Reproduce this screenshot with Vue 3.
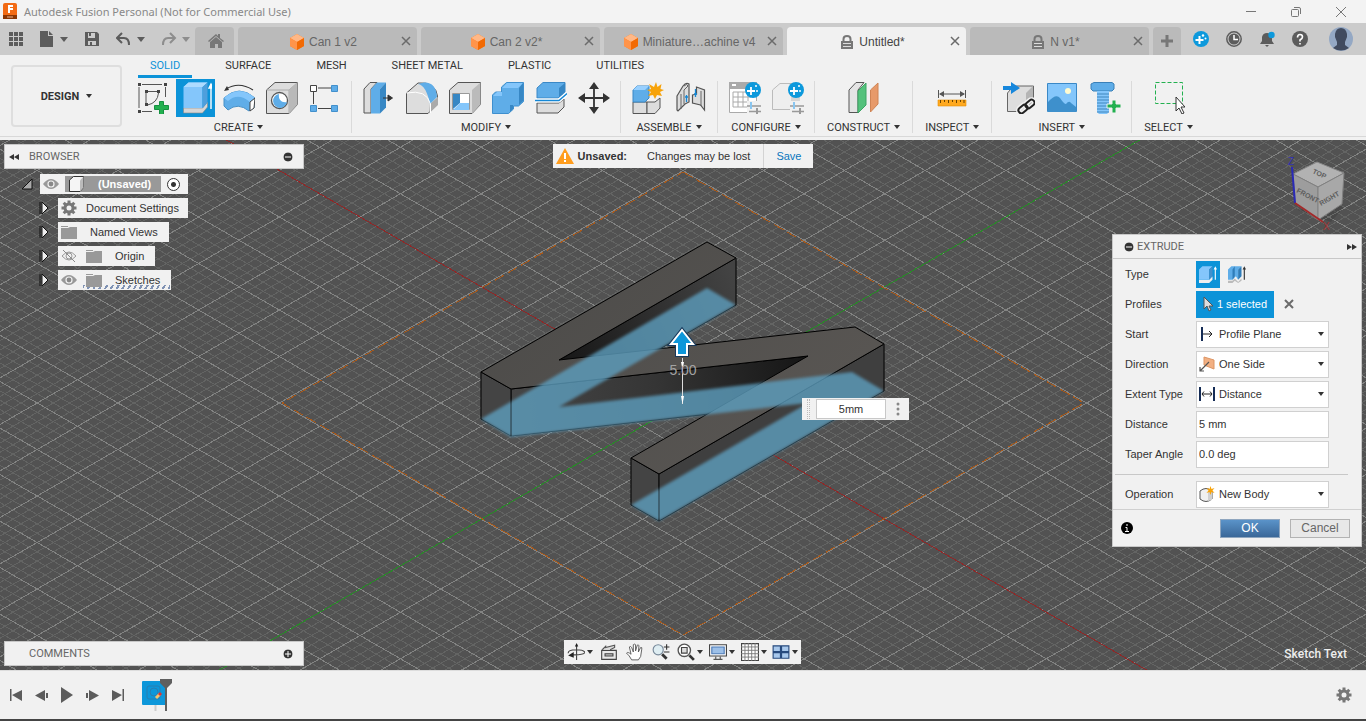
<script setup>
import { ref } from "vue";

const icons = {
  sketch: `<path d="M2 5v21M5 2.500h20M28.500 5v10M5 29.500h10" fill="none" stroke="#555"/><path d="M9 11v10M11 9.500h9M21.500 11q-1 10-11 12" fill="none" stroke="#555"/><g fill="#444"><path d="M1 1h3v3H1zM27 1h3v3h-3zM1 28h3v3H1zM8 8h3v3H8zM20 8h3v3h-3zM8 21h3v3H8z"/></g><path d="M22.500 19.500h4v4h5v4h-5v5h-4v-5h-5v-4h5z" fill="#22b04f" stroke="#159040"/>`,
  extrude: `<path d="M3.500 26v5h19l5-6v-5l-5 6z" fill="#d6d6d6" stroke="#888" stroke-width=".6"/><path d="M3.500 5l5-4.500h19l-5 4.500v21h-19z" fill="#84c6fb"/><path d="M3.500 5l5-4.500h19l-5 4.500z" fill="#addbff"/><path d="M22.500 5l5-4.500v20l-5 6z" fill="#4e9fdc"/><path d="M31 27V4M29 6l2-4 2 4z" stroke="#fff" fill="#fff" stroke-width="1.400"/>`,
  revolve: `<path d="M1 16Q16 2 32 16l-1 10-5 3Q15 20 5 28l-4-4z" fill="#5fade8" stroke="#4790c6"/><path d="M1 16Q16 2 32 16l-5 4Q15 10 5 19z" fill="#84c6fb"/><path d="M27 20l5-4-1 10-4 3z" fill="#fff" stroke="#444"/><path d="M3 7Q16-1 30 8" fill="none" stroke="#333" stroke-width="1.200"/><path d="M1 9l3-5 2 4z" fill="#333"/>`,
  hole: `<path d="M.5 8L9 .5h22.500v22L23 31.500H.5z" fill="#ddd" stroke="#555"/><path d="M.5 8H23L31.500.5M23 8v23.500" fill="none" stroke="#aaa"/><path d="M23 8l8.500-7.500v22L23 31.500z" fill="#b9b9b9"/><circle cx="13.500" cy="18.500" r="8" fill="#fff" stroke="#555" stroke-width="1.300"/><path d="M13 12a7 7 0 1 0 8 8c-5 1-9-2-8-8z" fill="#5fade8"/>`,
  pattern: `<path d="M9 6h13M4.500 9v13M9 26.500h13" stroke="#444" fill="none"/><path d="M1.500 3.500h6v6h-6z" fill="#fff" stroke="#444"/><path d="M22.500 3.500h6v6h-6zM22.500 23.500h6v6h-6zM1.500 23.500h6v6h-6z" fill="#5fade8" stroke="#4290cc"/>`,
  presspull: `<path d="M1 7l6-6.500h7L8 7v24H1z" fill="#ddd" stroke="#555"/><path d="M8 7l6-6.500h9L17 7v24.500H8z" fill="#5fade8"/><path d="M17 7l6-6.500v25l-6 6z" fill="#3787c4"/><path d="M20 16h6M25 13l4.500 3-4.500 3z" stroke="#333" fill="#333"/>`,
  fillet: `<path d="M.5 11L12 1q18-2 20 15l-1 6-9 9.500H.5z" fill="#ddd" stroke="#555"/><path d="M12 2q8 1 12 20l7-7Q30 0 18 .500z" fill="#5fade8"/><path d="M24 22l8-7v8l-9 8.500z" fill="#aaa"/><path d="M.5 11q20-4 24 11v9" fill="none" stroke="#fff"/>`,
  shell: `<path d="M.5 8L9 .5h22.500v22L23 31.500H.5z" fill="#ddd" stroke="#555"/><path d="M23 8l8.500-7.500v22L23 31.500z" fill="#bbb"/><path d="M3.500 11.500h17v16h-17z" fill="#fff" stroke="#999"/><path d="M4 12h7v9l-7 6z" fill="#3787c4"/><path d="M4 28l7-7h9v7z" fill="#84c6fb"/>`,
  combine: `<path d="M.5 13l3-3h6V5l5-4.500h17v19l-5 4.500h-5v3l-5 4.500H.5z" fill="#5fade8" stroke="#3e8fce"/><path d="M10 6l5-5h16l-5 5zM1 14l4-4h5v4z" fill="#84c6fb"/><path d="M27 6l4-5v18l-4 4zM18 23h3v4l-3 3z" fill="#3787c4"/>`,
  split: `<path d="M2 6l6-5.500h22v10L23 16H2z" fill="#5fade8" stroke="#3a88c6"/><path d="M24 6l6-5v9l-6 6z" fill="#3787c4"/><path d="M2 21h22l5-4v8l-6 6H2z" fill="#ddd" stroke="#555"/><path d="M0 18.500h24l8-7" fill="none" stroke="#fff" stroke-width="4"/><path d="M0 18.500h24l8-7" fill="none" stroke="#1588d6" stroke-width="1.400"/>`,
  move: `<path d="M16 4v24M4 16h24" stroke="#333" stroke-width="1.800"/><path d="M16 0l5 7H11zM16 32l5-7H11zM0 16l7-5v10zM32 16l-7-5v10z" fill="#333"/>`,
  component: `<path d="M1 20h14v11.500H1z" fill="#ddd" stroke="#555"/><path d="M15 20h8l5-4v10l-5 5.500h-8z" fill="#ddd" stroke="#555"/><path d="M1 20V8l4-4h12v12l-4 4z" fill="#5fade8" stroke="#3a88c6"/><path d="M1 8l4-4h12l-4 4z" fill="#98d0ff"/><path d="M24 0l1.500 5 4-3-1 5 3.500 1-4 2 2 4-5-1-2 4-2-4-5 1 3-4-4-2 4-1-2-5 5 3z" fill="#f7a30a"/>`,
  joint: `<path d="M2 14l6-10q3-4 6-2v18l-4 2-7 7-1-1z" fill="#ddd" stroke="#555" stroke-width="1.200"/><path d="M6 12v15M9 4q3-3 4 0l-4 4v14" fill="none" stroke="#666"/><path d="M17.500 13l4-1V5l8 3v20l-4-5-8-2z" fill="#ddd" stroke="#555" stroke-width="1.200"/><path d="M26 9v15" stroke="#666"/><path d="M11.500 13v7M10 15h3M20.500 7v8M19 12h3" stroke="#1588d6" stroke-width="1.300" fill="none"/>`,
  configtable: `<path d="M.5.500h27v30H.5z" fill="#fff" stroke="#aaa"/><path d="M0 0h28v7H0z" fill="#aaa"/><path d="M3 2h4v2H3z" fill="#fff"/><path d="M4 10h16M4 15h18M4 20h18M4 25h18M4 10v15M9 10v15M14 10v15M19 10v15" stroke="#aaa"/><path d="M18 19h14v13H18z" fill="#f1f1f1"/><path d="M18 24h14M20 29.500h12" stroke="#999" stroke-width="1.500"/><path d="M22 20v7" stroke="#8ac6f0" stroke-width="2"/><path d="M28 26v6" stroke="#999" stroke-width="2"/><circle cx="24" cy="8" r="8" fill="#0d99dc"/><path d="M22 5v8M18 9h8" stroke="#fff" stroke-width="1.800"/><circle cx="27" cy="4" r="1" fill="#fff"/><circle cx="28" cy="9" r="1" fill="#fff"/>`,
  configbody: `<path d="M.5 8L8 1.500h19v18l-8 8H.5z" fill="#eee" stroke="#bbb"/><path d="M19 8l8-6v17l-8 8z" fill="#d5d5d5"/><path d="M18 19h14v13H18z" fill="#f1f1f1"/><path d="M18 24h14M20 29.500h12" stroke="#999" stroke-width="1.500"/><path d="M22 20v7" stroke="#8ac6f0" stroke-width="2"/><path d="M28 26v6" stroke="#999" stroke-width="2"/><circle cx="24" cy="8" r="8" fill="#0d99dc"/><path d="M22 5v8M18 9h8" stroke="#fff" stroke-width="1.800"/><circle cx="27" cy="4" r="1" fill="#fff"/><circle cx="28" cy="9" r="1" fill="#fff"/>`,
  plane: `<path d="M1 8l7-7.500h8L10 8v22.500H1z" fill="#e4e4e4" stroke="#555"/><path d="M10 9l8-8v22l-8 8z" fill="#54c27c" stroke="#3da565"/><path d="M22.500 8l7.500-7v21l-7.500 8z" fill="#e79a6a" stroke="#cf8455"/>`,
  measure: `<path d="M2.500 8v8M29.500 8v8M4 12h24" stroke="#555"/><path d="M3 12l5-3v6zM29 12l-5-3v6z" fill="#555"/><path d="M2 18h28v6H2z" fill="#ffa91f" stroke="#e58d00" stroke-width=".6"/><path d="M4.500 18v3M8.500 18v2M12.500 18v3M16.500 18v2M20.500 18v3M24.500 18v2M28 18v3" stroke="#6a4300"/>`,
  derive: `<path d="M4.500 11l6-7h20v17L23 29.500H4.500z" fill="#ddd" stroke="#666"/><path d="M23 11l7-7v18l-7 7z" fill="#b5b5b5"/><path d="M0 4h8V0l9 6-9 6V8H0z" fill="#1787dc"/><g fill="none" stroke="#f1f1f1" stroke-width="5"><rect x="15" y="24" width="10" height="6" rx="3" transform="rotate(-40 20 27)"/><rect x="22" y="19" width="10" height="6" rx="3" transform="rotate(-40 27 22)"/></g><g fill="none" stroke="#222" stroke-width="2"><rect x="15" y="24" width="10" height="6" rx="3" transform="rotate(-40 20 27)"/><rect x="22" y="19" width="10" height="6" rx="3" transform="rotate(-40 27 22)"/></g>`,
  picture: `<path d="M1.500 1.500h29v28h-29z" fill="#84c6fb" stroke="#3a88c6"/><circle cx="22" cy="9" r="3" fill="#fffbd0"/><path d="M2 20q8-9 12-4 4 6 6 6 3-4 5-1l5 4v5H2z" fill="#3e90cc"/>`,
  bolt: `<path d="M2 2l3-1.500h18l2 1.500v5l-2 2H4L2 7z" fill="#5fade8" stroke="#3a80b8"/><path d="M8 9h12v21l-2 2h-8l-2-2z" fill="#84c6fb"/><path d="M8 12h12M8 15h12M8 18h12M8 21h12M8 24h12M8 27h12M8 30h12" stroke="#3e86bd"/><path d="M23 18h4v4h5v4h-5v5h-4v-5h-5v-4h5z" fill="#22b04f" stroke="#f1f1f1"/>`,
  selectbox: `<path d="M2.500.500h27v21h-27z" fill="none" stroke="#22b04f" stroke-dasharray="4 2"/><path d="M23 15v14l3-3 3 6 2-1-3-6h4z" fill="#fff" stroke="#333"/>`,
  grid: `<path d="M0 0h4v4H0zM5 0h4v4H5zM10 0h4v4h-4zM0 5h4v4H0zM5 5h4v4H5zM10 5h4v4h-4zM0 10h4v4H0zM5 10h4v4H5zM10 10h4v4h-4z" fill="#5c5c5c"/>`,
  file: `<path d="M1 0h8v5h5v11H1zM10 0l4 4h-4z" fill="#5c5c5c"/>`,
  save: `<path d="M1 1h12l2 2v12H1z" fill="#5c5c5c"/><path d="M4 2h7v5H4zM4 10h8v4H4z" fill="#ccc"/><path d="M5 2h2v3H5zM6 11h2v3H6z" fill="#5c5c5c"/>`,
  undo: `<path d="M2 7h6q5 0 5 7" fill="none" stroke="currentColor" stroke-width="2"/><path d="M6 2L1 7l5 5" fill="none" stroke="currentColor" stroke-width="2"/>`,
  redo: `<path d="M13 7H7q-5 0-5 7" fill="none" stroke="currentColor" stroke-width="2"/><path d="M9 2l5 5-5 5" fill="none" stroke="currentColor" stroke-width="2"/>`,
  home: `<path d="M0 8l8-7 2 2V1h2v4l4 3-1 1-7-6-7 6zM2 9l6-5 6 5v6h-4v-4H7v4H2z" fill="#777"/>`,
  cube: `<path d="M8 0l7 4v8l-7 4-7-4V4z" fill="#ff7b1c"/><path d="M8 0l7 4-7 4-7-4z" fill="#ffb887"/><path d="M1 4l7 4v8l-7-4z" fill="#ff944a"/><path d="M8 8l7-4v8l-7 4z" fill="#f26a04"/>`,
  lock: `<path d="M4.500 8V5Q4.500 2 8 2t3.500 3v3" fill="none" stroke="#777" stroke-width="2"/><path d="M2 7h12v8H2z" fill="#777"/><path d="M4 9.500h8M4 12.500h8" stroke="#ddd"/>`,
  sparkle: `<circle cx="8" cy="8" r="8" fill="#0d99dc"/><path d="M6.500 5v8M2.500 9h8" stroke="#fff" stroke-width="2"/><circle cx="10" cy="4.500" r="1.200" fill="#fff"/><circle cx="12.500" cy="7.500" r="1" fill="#fff"/>`,
  clock: `<circle cx="8" cy="8" r="7.200" fill="none" stroke="#5c5c5c" stroke-width="1.500"/><circle cx="8" cy="8" r="5.500" fill="#5c5c5c"/><path d="M8 4v4.500h4" fill="none" stroke="#fff" stroke-width="1.500"/>`,
  bell: `<path d="M1 13l2-3V6q1-4 5-4t5 4v4l2 3zM6 14h4l-2 2z" fill="#5c5c5c"/><circle cx="12.500" cy="4" r="3.200" fill="#0d99dc"/>`,
  help: `<circle cx="8" cy="8" r="8" fill="#5c5c5c"/><path d="M5.500 6.500q0-3 2.500-3t2.500 2.500Q10.500 7.500 8 9v1.500M8 12v1.500" stroke="#fff" stroke-width="1.600" fill="none"/>`,
  gear: `<g fill="#777"><circle cx="8" cy="8" r="5.500"/><path d="M6.500.500h3v15h-3z"/><path d="M6.500.500h3v15h-3z" transform="rotate(45 8 8)"/><path d="M6.500.500h3v15h-3z" transform="rotate(90 8 8)"/><path d="M6.500.500h3v15h-3z" transform="rotate(135 8 8)"/></g><circle cx="8" cy="8" r="2.500" fill="#f1f1f1"/>`,
  eye: `<path d="M0 8q8-10 16 0-8 10-16 0z" fill="#999"/><circle cx="8" cy="8" r="3.600" fill="#f1f1f1"/><circle cx="8" cy="8" r="2.400" fill="#888"/>`,
  hidden: `<path d="M1 8q7-8 14 0-7 8-14 0z" fill="none" stroke="#999"/><circle cx="8" cy="8" r="3" fill="none" stroke="#999"/><path d="M2 2l12 12" stroke="#888"/>`,
  folder: `<path d="M0 2h7v1H0zM0 4h7l2-1h7v12H0z" fill="#999"/>`,
  body: `<path d="M1.500 4l4-3.500h10v11L12 15.500H1.500z" fill="#f5f5f5" stroke="#333"/><path d="M12 4.500l3.500-4v11l-3.500 4z" fill="#bbb"/>`,
  orbit: `<path d="M8.500 1v14M1 9q0-3 7-3t8 2.500Q14 11 4 10.500" fill="none" stroke="#444"/><path d="M7 3l1.500-3L10 3M6 8l-5 3 5 2z" fill="#222"/>`,
  lookat: `<path d="M1.500 6.500h13v8h-13z" fill="#e8e8e8" stroke="#444"/><path d="M4.500 9.500h7v2h-7z" fill="#bbb" stroke="#444"/><path d="M2 6l3-3v1l8-2v2L9 6" fill="#ddd" stroke="#555"/>`,
  hand: `<path d="M5 15Q3 11 .500 9q1-1.500 4 1L3 3.500q1-1 2 .5l1.500 4V1.500q1-1 2 0V7l1.500-5q1-1 1.500.5L11 8l2-4q1.500-.5 1 1.500L13 12l-2 3z" fill="#fff" stroke="#555" stroke-width=".8"/>`,
  zoom: `<circle cx="5.500" cy="6" r="4.500" fill="#deedf2" stroke="#789"/><path d="M9 10l4 4" stroke="#333" stroke-width="2.500"/><path d="M13 1v5M10.500 3.500h5M10.500 8h5" stroke="#333"/>`,
  fit: `<circle cx="6.500" cy="6.500" r="5.500" fill="#fff" stroke="#555" stroke-width="1.200"/><path d="M4 4h5v5H4z" fill="#ddd" stroke="#444"/><path d="M11 11l4 4" stroke="#333" stroke-width="2.500"/>`,
  display: `<path d="M.500 1.500h15v10H.5z" fill="#fff" stroke="#444"/><path d="M2.500 3.500h11v6h-11z" fill="#9dc0e8" stroke="#4b78b5"/><path d="M4 14.500h8M6 12v2M10 12v2" stroke="#555"/>`,
  mesh: `<path d="M.500.500h15v15H.5z" fill="#fff" stroke="#444"/><path d="M3.500 0v16M6.500 0v16M9.500 0v16M12.500 0v16M0 3.500h16M0 6.500h16M0 9.500h16M0 12.500h16" stroke="#777" stroke-width=".8"/>`,
  views: `<path d="M1 2.500h6.500v5H1zM8.500 2.500H15v5H8.500zM1 8.500h6.500v5H1zM8.500 8.500H15v5H8.500z" fill="#a8c8ec" stroke="#274a7d"/>`,
  first: `<path d="M1 2h1.500v12H1zM13 3v11L3 8z" fill="#5c5c5c"/>`,
  prev: `<path d="M11 3v11L1 8.500zM12 6h2v5h-2z" fill="#5c5c5c"/>`,
  play: `<path d="M2 0l12 8-12 8z" fill="#5c5c5c"/>`,
  next: `<path d="M5 3v11l10-5.500zM2 6h2v5H2z" fill="#5c5c5c"/>`,
  last: `<path d="M13.500 2H15v12h-1.500zM3 3v11l10-6z" fill="#5c5c5c"/>`,
  profile: `<path d="M3 1v14" stroke="#152c56" stroke-width="2"/><path d="M4 8h9M10 5l3 3-3 3" fill="none" stroke="#222"/>`,
  oneside: `<path d="M5 1l10 3v9L5 9z" fill="#f2b083" stroke="#dd9564"/><path d="M10 6l-9 9M1 11v4h4" fill="none" stroke="#555" stroke-width="1.200"/>`,
  distance: `<path d="M1 1v14M15 1v14" stroke="#152c56" stroke-width="2"/><path d="M3 8h10M5 5.500L3 8l2 2.500M11 5.500L13 8l-2 2.500" fill="none" stroke="#222"/>`,
  newbody: `<path d="M1 5v8q6 5 12 0V5q-6-5-12 0z" fill="#f0f0f0" stroke="#555"/><path d="M9 6h4v8l-4 1z" fill="#d0d0d0"/><path d="M11.500 0l1 3 3-1-2 2.500 2 2.500-3-1-1 3-1-3-3 1 2-2.500-2-2.500 3 1z" fill="#f7a30a"/>`,
  typesolid: `<path d="M0 13h9l3-3v3l-3 3H0z" fill="#eee"/><path d="M0 4l3-3h9L9 4v9H0z" fill="#84c6fb"/><path d="M9 4l3-3v9l-3 3z" fill="#4290cc"/><path d="M14.500 13V3" stroke="#fff"/><path d="M13 4l1.500-3L16 4z" fill="#fff"/>`,
  typethin: `<path d="M0 14h4l2-2 3 3 3-3v2l-3 2-3-2-2 2H0z" fill="#bbb"/><path d="M0 4l3-3h9L9 4v9l-2-3-3 3H0z" fill="#5fade8"/><path d="M9 4l3-3v9l-3 3zM4 4l2-3v9l-2 3z" fill="#2f7db9"/><path d="M14.500 13V3" stroke="#333"/><path d="M13 4l1.500-3L16 4z" fill="#333"/>`,
};

const docTabs = [
  { title: "Can 1 v2", icon: "cube" },
  { title: "Can 2 v2*", icon: "cube" },
  { title: "Miniature…achine v4", icon: "cube" },
  { title: "Untitled*", icon: "lock", active: true },
  { title: "N v1*", icon: "lock" },
];

const ribbonTabs = ["SOLID", "SURFACE", "MESH", "SHEET METAL", "PLASTIC", "UTILITIES"];
const activeRibbon = ref("SOLID");

const toolGroups = [
  { name: "CREATE", tools: ["sketch", "extrude", "revolve", "hole", "pattern"] },
  { name: "MODIFY", tools: ["presspull", "fillet", "shell", "combine", "split", "move"] },
  { name: "ASSEMBLE", tools: ["component", "joint"] },
  { name: "CONFIGURE", tools: ["configtable", "configbody"] },
  { name: "CONSTRUCT", tools: ["plane"] },
  { name: "INSPECT", tools: ["measure"] },
  { name: "INSERT", tools: ["derive", "picture", "bolt"] },
  { name: "SELECT", tools: ["selectbox"] },
];

const treeRows = [
  { label: "Document Settings", icons: ["gear"] },
  { label: "Named Views", icons: ["folder"], folder: true },
  { label: "Origin", icons: ["hidden", "folder"], folder: true },
  { label: "Sketches", icons: ["eye", "folder"], folder: true, hatched: true },
];

const navTools = [
  { icon: "orbit", menu: true },
  { icon: "lookat" },
  { icon: "hand" },
  { icon: "zoom" },
  { icon: "fit", menu: true },
  { icon: "display", menu: true },
  { icon: "mesh", menu: true },
  { icon: "views", menu: true },
];

const selects = [
  { id: "start", label: "Start", icon: "profile", value: "Profile Plane" },
  { id: "direction", label: "Direction", icon: "oneside", value: "One Side" },
  { id: "extent", label: "Extent Type", icon: "distance", value: "Distance" },
];

const distance = ref("5 mm");
const taper = ref("0.0 deg");
const inlineValue = ref("5mm");

// isometric floor grid, every fifth line is a major one
const slope = 0.576;
const step = 9.3;
let minor = "";
let major = "";
for (let k = -80; k <= 80; k++) {
  const y = 403 + k * step;
  const rise = 1000 * slope;
  const d = `M-317 ${y - rise}L1683 ${y + rise}M-317 ${y + rise}L1683 ${y - rise}`;
  if (k % 5 === 0) {
    major += d;
  } else {
    minor += d;
  }
}
</script>

<template>
  <div class="app">
    <header class="titlebar">
      <svg class="logo" viewBox="0 0 15 17">
        <rect width="14" height="16" rx="2" fill="#f26a14" />
        <path d="M0 12h14v4H0z" fill="#8a3503" />
        <path d="M6 10V3h4M6 6h4" fill="none" stroke="#fff" stroke-width="2" />
        <path d="M4 14h6" stroke="#e8b494" />
      </svg>
      <h1>Autodesk Fusion Personal (Not for Commercial Use)</h1>
      <div class="window-buttons">
        <button aria-label="Minimize"><svg viewBox="0 0 12 12"><path d="M1 5.500h10" /></svg></button>
        <button aria-label="Restore">
          <svg viewBox="0 0 12 12"><rect x="1.500" y="3.500" width="7" height="7" rx="1" /><path d="M4 1.500h5q1.500 0 1.500 1.500v5" /></svg>
        </button>
        <button aria-label="Close"><svg viewBox="0 0 12 12"><path d="M1 1l10 10M11 1L1 11" /></svg></button>
      </div>
    </header>

    <nav class="tabbar">
      <div class="quick">
        <button aria-label="Data panel"><svg class="i14" viewBox="0 0 14 14" v-html="icons.grid"></svg></button>
        <button aria-label="File"><svg class="i16" viewBox="0 0 16 16" v-html="icons.file"></svg><i class="caret"></i></button>
        <button aria-label="Save"><svg class="i16" viewBox="0 0 16 16" v-html="icons.save"></svg></button>
        <button aria-label="Undo"><svg class="i16" viewBox="0 0 16 16" v-html="icons.undo"></svg><i class="caret"></i></button>
        <button aria-label="Redo" class="faded"><svg class="i16" viewBox="0 0 16 16" v-html="icons.redo"></svg><i class="caret"></i></button>
      </div>
      <button class="home" aria-label="Home"><svg class="i16" viewBox="0 0 16 16" v-html="icons.home"></svg></button>
      <div v-for="tab in docTabs" :key="tab.title" class="doc-tab" :class="{ active: tab.active }">
        <span class="doc-title"><svg class="i16" viewBox="0 0 16 16" v-html="icons[tab.icon]"></svg>{{ tab.title }}</span>
        <button class="close" aria-label="Close tab"><svg viewBox="0 0 12 12"><path d="M2 2l8 8M10 2l-8 8" /></svg></button>
      </div>
      <button class="add-tab" aria-label="New tab"><svg viewBox="0 0 14 14"><path d="M7 1v12M1 7h12" stroke="#777" stroke-width="3" /></svg></button>
      <div class="account">
        <button v-for="name in ['sparkle', 'clock', 'bell', 'help']" :key="name" :aria-label="name">
          <svg class="i16" viewBox="0 0 16 16" v-html="icons[name]"></svg>
        </button>
        <svg class="avatar" viewBox="0 0 24 24">
          <circle cx="12" cy="12" r="12" fill="#94a8c4" />
          <path d="M6 7q1-6 6-6t6 6v3l-2 5v3l4 3q-8 5-16 0l4-3v-3l-2-5z" fill="#414b5f" />
        </svg>
      </div>
    </nav>

    <section class="ribbon">
      <button class="workspace">DESIGN <i class="caret"></i></button>
      <div class="ribbon-main">
        <div class="ribbon-tabs">
          <button
            v-for="name in ribbonTabs"
            :key="name"
            :class="{ active: name === activeRibbon }"
            @click="activeRibbon = name"
          >
            {{ name }}
          </button>
        </div>
        <div class="groups">
          <div v-for="group in toolGroups" :key="group.name" class="group">
            <div class="tools">
              <button v-for="tool in group.tools" :key="tool" :class="{ chosen: tool === 'extrude' }" :aria-label="tool">
                <svg viewBox="0 0 32 32" v-html="icons[tool]"></svg>
              </button>
            </div>
            <button class="group-name">{{ group.name }} <i class="caret"></i></button>
          </div>
        </div>
      </div>
    </section>

    <main class="viewport">
      <svg class="canvas" viewBox="0 140 1366 530" preserveAspectRatio="xMidYMid slice">
        <defs>
          <linearGradient id="wallA" gradientUnits="userSpaceOnUse" x1="570" y1="360" x2="735" y2="280">
            <stop offset="0" stop-color="#191919" />
            <stop offset="1" stop-color="#434343" />
          </linearGradient>
          <linearGradient id="wallB" gradientUnits="userSpaceOnUse" x1="512" y1="410" x2="800" y2="370">
            <stop offset="0" stop-color="#464646" />
            <stop offset="0.500" stop-color="#353535" />
            <stop offset="1" stop-color="#171717" />
          </linearGradient>
          <linearGradient id="lid" x1="0" y1="0" x2="1" y2="0.600">
            <stop offset="0" stop-color="#4b4a48" />
            <stop offset="1" stop-color="#595653" />
          </linearGradient>
          <filter id="soft"><feGaussianBlur stdDeviation="1.500" /></filter>
        </defs>
        <rect y="-300" x="-300" width="2000" height="1500" fill="#525252" />
        <g fill="none" shape-rendering="crispEdges">
          <path :d="minor" stroke="#636463" />
          <path :d="major" stroke="#838483" />
          <path d="M-20 -2L1386 808" stroke="#8f2727" />
          <path d="M-20 808L1386 -2" stroke="#288a28" />
          <path d="M683 172L1084 403 683 635 282 403z" stroke="#a8591a" stroke-dasharray="11 4" />
        </g>
        <g stroke="#000" stroke-linejoin="round">
          <path d="M736 258L559 360V407L736 305z" fill="url(#wallA)" />
          <path d="M511 389L808 356V403L511 436z" fill="url(#wallB)" />
          <path d="M481 372L511 389V436L481 419z" fill="#444" />
          <path d="M631 458L659 474V521L631 505z" fill="#444" />
          <path d="M884 344L659 474V521L884 391z" fill="#3f3f3f" />
          <path d="M707 242L736 258 559 360 855 327 884 344 659 474 631 458 808 356 511 389 481 372z" fill="url(#lid)" />
        </g>
        <path
          d="M707 288L736 305 559 407 852 372 884 391 659 521 631 505 808 403 511 437 481 419z"
          fill="#5d9ebe"
          opacity="0.800"
          filter="url(#soft)"
        />
        <path d="M736 258V305M511 389V436M659 474V521M884 344V391" stroke="#222" opacity="0.700" />
        <path d="M682.500 358V404" stroke="#ddd" />
        <path d="M681 362l1.500 8 1.500-8M681 396l1.500 8 1.500-8" fill="#fff" />
        <text x="683" y="375" class="dimension">5.00</text>
        <path d="M682 330L693 344H687V355H677V344H671z" fill="#0d97da" stroke="#17385a" stroke-width="4" />
        <path d="M682 330L693 344H687V355H677V344H671z" fill="#0d97da" stroke="#fff" stroke-width="2" />
      </svg>

      <div class="left-side">
        <div class="panel">
          <svg class="rewind" viewBox="0 0 10 8"><path d="M5 1v6L0 4zM10 1v6L5 4z" /></svg>
          <h2>BROWSER</h2>
          <button class="round" aria-label="Collapse browser"><svg viewBox="0 0 10 10"><circle cx="5" cy="5" r="5" /><path d="M2 5h6" /></svg></button>
        </div>
        <ul class="tree">
          <li class="root">
            <svg class="opened" viewBox="0 0 12 12"><path d="M11 1v10H1z" fill="#aaa" stroke="#111" /></svg>
            <div class="node">
              <svg class="i16" viewBox="0 0 16 16" v-html="icons.eye"></svg>
              <span class="doc-name"><svg class="i16" viewBox="0 0 16 16" v-html="icons.body"></svg>(Unsaved)</span>
              <input type="radio" checked aria-label="Activate component" />
            </div>
          </li>
          <li v-for="row in treeRows" :key="row.label">
            <svg class="closed" viewBox="0 0 10 14"><path d="M1 1v12M3 1l6 6-6 6z" fill="#eee" stroke="#111" /></svg>
            <div class="node" :class="{ folder: row.folder, hatched: row.hatched }">
              <svg v-for="name in row.icons" :key="name" class="i16" viewBox="0 0 16 16" v-html="icons[name]"></svg>
              <span>{{ row.label }}</span>
            </div>
          </li>
        </ul>
        <div class="panel comments">
          <h2>COMMENTS</h2>
          <button class="round" aria-label="Open comments"><svg viewBox="0 0 10 10"><circle cx="5" cy="5" r="5" /><path d="M2 5h6M5 2v6" /></svg></button>
        </div>
      </div>

      <div class="middle">
        <div class="notice">
          <svg viewBox="0 0 18 16"><path d="M9 0l9 16H0z" fill="#ff9d1e" /><path d="M9 5v6M9 12v2" stroke="#fff" stroke-width="2" /></svg>
          <strong>Unsaved:</strong>
          <span>Changes may be lost</span>
          <a href="#">Save</a>
        </div>
        <div class="navbar">
          <button v-for="tool in navTools" :key="tool.icon" :class="{ plain: !tool.menu }" :aria-label="tool.icon">
            <svg class="i18" viewBox="0 0 16 16" v-html="icons[tool.icon]"></svg>
            <i v-if="tool.menu" class="caret"></i>
          </button>
        </div>
      </div>

      <div class="right-side">
        <svg class="viewcube" viewBox="0 0 70 84">
          <path d="M18 60l33 12 12-14-10-12z" fill="#333" opacity="0.300" />
          <path d="M37 12L64 23 38 37 13 24z" fill="#b2b2b2" stroke="#888" />
          <path d="M13 24L38 37V70L15 53z" fill="#9d9d9d" stroke="#808080" />
          <path d="M38 37L64 23 62 54 38 70z" fill="#a8a8a8" stroke="#808080" />
          <path d="M12 17L15 53" stroke="#2a2ab8" stroke-width="2" />
          <path d="M15 53L43 72" stroke="#a32a2a" stroke-width="2" />
          <text x="8" y="15" class="axis">Z</text>
          <text x="43" y="80" class="axis axis-x">X</text>
          <text x="32" y="23" transform="rotate(24 32 23)">TOP</text>
          <text x="16" y="42" transform="rotate(28 16 42)">FRONT</text>
          <text x="41" y="56" transform="rotate(-30 41 56)">RIGHT</text>
        </svg>

        <form class="dialog" @submit.prevent>
          <div class="dialog-head">
            <button type="button" class="round" aria-label="Collapse"><svg viewBox="0 0 10 10"><circle cx="5" cy="5" r="5" /><path d="M2 5h6" /></svg></button>
            <h2>EXTRUDE</h2>
            <svg class="rewind" viewBox="0 0 10 8"><path d="M0 1v6l5-3zM5 1v6l5-3z" /></svg>
          </div>
          <div class="row">
            <span class="label">Type</span>
            <button type="button" class="type chosen" aria-label="Extrude"><svg class="i18" viewBox="0 0 16 16" v-html="icons.typesolid"></svg></button>
            <button type="button" class="type" aria-label="Thin extrude"><svg class="i18" viewBox="0 0 16 16" v-html="icons.typethin"></svg></button>
          </div>
          <div class="row">
            <span class="label">Profiles</span>
            <button type="button" class="picked">
              <svg viewBox="0 0 10 16"><path d="M1 1v12l3-3 2 5 2-1-2-4h4z" fill="#ddd" stroke="#555" /></svg>
              1 selected
            </button>
            <button type="button" class="clear" aria-label="Clear selection"><svg viewBox="0 0 12 12"><path d="M2 2l8 8M10 2l-8 8" /></svg></button>
          </div>
          <div v-for="item in selects" :key="item.id" class="row">
            <label class="label" :for="item.id">{{ item.label }}</label>
            <div class="field">
              <svg class="i16" viewBox="0 0 16 16" v-html="icons[item.icon]"></svg>
              <select :id="item.id"><option>{{ item.value }}</option></select>
              <i class="caret"></i>
            </div>
          </div>
          <div class="row">
            <label class="label" for="distance">Distance</label>
            <input id="distance" v-model="distance" class="field" type="text" />
          </div>
          <div class="row">
            <label class="label" for="taper">Taper Angle</label>
            <input id="taper" v-model="taper" class="field" type="text" />
          </div>
          <hr />
          <div class="row">
            <label class="label" for="operation">Operation</label>
            <div class="field">
              <svg class="i16" viewBox="0 0 16 16" v-html="icons.newbody"></svg>
              <select id="operation"><option>New Body</option></select>
              <i class="caret"></i>
            </div>
          </div>
          <div class="dialog-foot">
            <svg class="info" viewBox="0 0 12 12"><circle cx="6" cy="6" r="6" /><path d="M6 2v2M4.500 5.500H6V9M4 9.500h4" /></svg>
            <button class="ok">OK</button>
            <button type="button" class="cancel">Cancel</button>
          </div>
        </form>
        <p class="hint">Sketch Text</p>
      </div>

      <div class="value-box">
        <i class="grip"></i>
        <input v-model="inlineValue" type="text" aria-label="Distance value" />
        <button aria-label="More"><svg viewBox="0 0 4 14"><circle cx="2" cy="2" r="1.500" /><circle cx="2" cy="7" r="1.500" /><circle cx="2" cy="12" r="1.500" /></svg></button>
      </div>
    </main>

    <footer class="timeline">
      <button v-for="name in ['first', 'prev', 'play', 'next', 'last']" :key="name" :aria-label="name">
        <svg class="i16" viewBox="0 0 16 16" v-html="icons[name]"></svg>
      </button>
      <svg class="feature" viewBox="0 0 32 34">
        <rect y="3" width="25" height="24" rx="1" fill="#0d97da" />
        <rect x="5" y="8" width="13" height="13" rx="2" fill="none" stroke="#2a7fb0" />
        <circle cx="12" cy="14" r="4" fill="none" stroke="#2a7fb0" />
        <path d="M14 20l4-4" stroke="#f7c26a" stroke-width="3" />
        <path d="M17 17l2-2" stroke="#d33" stroke-width="3" />
        <path d="M13.500 27v6" stroke="#ccc" stroke-width="2" />
        <path d="M18 1h12v4l-5 5v23h-2V10l-5-5z" fill="#5f5f5f" />
      </svg>
      <button class="settings" aria-label="Timeline settings"><svg class="i16" viewBox="0 0 16 16" v-html="icons.gear"></svg></button>
    </footer>
  </div>
</template>

<style>
body {
  margin: 0;
}
</style>

<style scoped>
.app {
  height: 100vh;
  display: flex;
  flex-direction: column;
  font-family: "Liberation Sans", Arial, sans-serif;
  font-size: 11px;
  color: #333;
  background-color: #f1f1f1;
  overflow: hidden;
}

* {
  box-sizing: border-box;
}

svg {
  flex: none;
  display: block;
}

button {
  border: none;
  padding: 0;
  background: none;
  font: inherit;
  color: inherit;
  display: flex;
  align-items: center;
  justify-content: center;
  cursor: pointer;
}

h1,
h2,
p,
ul {
  margin: 0;
  padding: 0;
  font-weight: normal;
}

.i14 {
  width: 14px;
  height: 14px;
}

.i16 {
  width: 16px;
  height: 16px;
}

.i18 {
  width: 18px;
  height: 18px;
}

.caret {
  border: 3px solid transparent;
  border-top: 4px solid currentColor;
  border-bottom: none;
}

.titlebar {
  height: 23px;
  display: flex;
  align-items: center;
  padding: 0 19px 0 3px;
  gap: 6px;
  background-color: #f3f3f3;
}

.logo {
  width: 15px;
  height: 17px;
}

.titlebar h1 {
  flex: 1;
  font-family: "Noto Sans", sans-serif;
  font-size: 11px;
  color: #888;
}

.window-buttons {
  display: flex;
  gap: 33px;
}

.window-buttons svg {
  width: 12px;
  height: 12px;
  fill: none;
  stroke: #777;
}

.tabbar {
  height: 32px;
  display: flex;
  align-items: flex-end;
  gap: 4px;
  background-color: #cbcbcb;
}

.quick {
  width: 191px;
  height: 32px;
  display: flex;
  align-items: center;
  gap: 16px;
  padding-left: 9px;
  color: #5c5c5c;
}

.quick button {
  gap: 5px;
}

.quick .caret {
  border-width: 5px 4px 0;
}

.quick .faded {
  color: #8d8d8d;
}

.home,
.doc-tab,
.add-tab {
  height: 28px;
  background-color: #bababa;
  border-radius: 4px 4px 0 0;
}

.home {
  width: 39px;
  padding-left: 3px;
}

.doc-tab {
  flex: 1;
  display: flex;
  align-items: center;
  padding: 0 5px 0 8px;
  font-size: 12px;
  color: #666;
}

.doc-tab.active {
  background-color: #f1f1f1;
  color: #444;
}

.doc-title {
  flex: 1;
  display: flex;
  justify-content: center;
  align-items: center;
  gap: 4px;
  padding-top: 1px;
}

.close svg,
.clear svg {
  width: 12px;
  height: 12px;
  stroke: #6b6b6b;
  stroke-width: 1.5px;
}

.add-tab {
  width: 28px;
}

.add-tab svg {
  width: 14px;
  height: 14px;
}

.account {
  height: 32px;
  width: 181px;
  padding-left: 8px;
  display: flex;
  align-items: center;
  gap: 17px;
}

.avatar {
  width: 24px;
  height: 24px;
  margin-left: 4px;
}

.ribbon {
  height: 85px;
  display: flex;
  gap: 9px;
  padding-left: 11px;
  font-family: Roboto, sans-serif;
  box-shadow: inset 0 -3px #f1f1f1, inset 0 -4px #d8d8d8;
}

.workspace {
  width: 111px;
  height: 62px;
  margin-top: 10px;
  border: 2px solid #dedede;
  border-radius: 4px;
  font-weight: bold;
  gap: 7px;
}

.ribbon-main {
  flex: 1;
}

.ribbon-tabs {
  height: 24px;
  display: flex;
  gap: 21px;
  padding-left: 7px;
}

.ribbon-tabs button {
  height: 23px;
  padding: 0 12px;
  border-bottom: 3px solid transparent;
}

.ribbon-tabs .active {
  color: #0c93d8;
  border-bottom-color: #0c93d8;
}

.groups {
  display: flex;
}

.group {
  height: 57px;
  padding: 0 6px 0 5px;
  background: linear-gradient(#dadada, #dadada) right 2px / 1px 52px no-repeat;
}

.group:first-child {
  padding-left: 0;
}

.group:last-child {
  background: none;
}

.tools {
  display: flex;
  justify-content: center;
}

.tools button {
  width: 39px;
  height: 38px;
  margin: 0 2px;
}

.tools svg {
  width: 32px;
  height: 32px;
}

.tools .chosen {
  background-color: #0c93d8;
}

.group-name {
  width: 100%;
  height: 20px;
  padding: 0 7px;
  gap: 4px;
}

.viewport {
  flex: 1;
  min-height: 0;
  position: relative;
  display: grid;
  grid-template-columns: 1fr auto 1fr;
  padding: 4px;
  background-color: #525252;
}

.canvas {
  position: absolute;
  inset: 0;
  width: 100%;
  height: 100%;
}

.dimension {
  font-size: 14px;
  fill: #a3a3a3;
  text-anchor: middle;
}

.left-side,
.middle,
.right-side {
  position: relative;
  display: flex;
  flex-direction: column;
}

.panel {
  width: 300px;
  height: 25px;
  padding: 0 10px 0 4px;
  display: flex;
  align-items: center;
  gap: 10px;
  background-color: #f1f1f1;
  border: 1px solid #c8c8c8;
}

.panel h2,
.dialog h2 {
  flex: 1;
  font-family: Roboto, sans-serif;
  font-size: 11px;
  color: #666;
}

.rewind {
  width: 10px;
  height: 8px;
  fill: #333;
}

.round svg {
  width: 10px;
  height: 10px;
  fill: #333;
  stroke: #fff;
}

.comments {
  margin-top: auto;
  padding-left: 24px;
}

.tree {
  list-style: none;
  margin-top: 5px;
  display: flex;
  flex-direction: column;
  gap: 4px;
}

.tree li {
  display: flex;
  align-items: center;
  gap: 9px;
  padding-left: 35px;
}

.tree .root {
  padding-left: 17px;
  gap: 7px;
}

.opened {
  width: 12px;
  height: 12px;
}

.closed {
  width: 10px;
  height: 14px;
}

.node {
  height: 20px;
  padding: 0 9px 0 3px;
  display: flex;
  align-items: center;
  gap: 9px;
  background-color: #f1f1f1;
}

.node.folder {
  padding-right: 11px;
}

.folder span {
  padding-left: 4px;
}

.hatched {
  background-image: repeating-linear-gradient(120deg, #7f92b4 0 2px, transparent 2px 5px);
  background-size: 87px 4px;
  background-position: 25px 15px;
  background-repeat: no-repeat;
}

.root .node {
  gap: 6px;
  padding-right: 8px;
}

.doc-name {
  height: 20px;
  padding: 0 10px 0 3px;
  display: flex;
  align-items: center;
  gap: 14px;
  font-weight: bold;
  color: #fff;
  background-color: #999;
  border: solid #f1f1f1;
  border-width: 2px 0;
}

.node input {
  width: 13px;
  height: 13px;
  margin: 0;
  appearance: none;
  border: 1px solid #333;
  border-radius: 50%;
  background: radial-gradient(circle, #333 0 2px, #fff 3px);
}

.middle {
  justify-content: space-between;
  align-items: center;
}

.notice {
  height: 24px;
  padding-left: 3px;
  display: flex;
  align-items: center;
  gap: 4px;
  background-color: #f1f1f1;
}

.notice svg {
  width: 18px;
  height: 16px;
}

.notice span {
  padding: 0 9px 0 16px;
}

.notice a {
  height: 24px;
  padding: 0 12px;
  line-height: 24px;
  border-left: 1px solid #d3d3d3;
  color: #0a76bd;
  text-decoration: none;
}

.navbar {
  width: 237px;
  height: 24px;
  margin-bottom: 2px;
  padding: 0 3px;
  display: flex;
  align-items: center;
  justify-content: space-between;
  background-color: #f1f1f1;
}

.navbar button {
  gap: 2px;
}

.navbar .plain {
  padding: 0 1px;
}

.right-side {
  align-items: flex-end;
}

.viewcube {
  width: 70px;
  height: 84px;
  margin: 6px 12px 0 0;
}

.viewcube text {
  font-size: 7px;
  font-weight: bold;
  fill: #5e5e5e;
}

.viewcube .axis {
  font-size: 10px;
  font-weight: normal;
  fill: #3030b5;
}

.viewcube .axis-x {
  fill: #a33030;
}

.dialog {
  width: 250px;
  background-color: #f1f1f1;
  border: 1px solid #c8c8c8;
}

.dialog-head {
  height: 24px;
  padding: 0 4px 0 11px;
  display: flex;
  align-items: center;
  gap: 3px;
  border-bottom: 1px solid #c8c8c8;
}

.row {
  height: 30px;
  padding-left: 12px;
  display: flex;
  align-items: center;
}

.label {
  width: 71px;
}

.type {
  width: 24px;
  height: 27px;
  margin-right: 5px;
}

.type.chosen,
.picked {
  background-color: #0c93d8;
}

.picked {
  width: 78px;
  height: 27px;
  gap: 4px;
  color: #fff;
}

.picked svg {
  width: 10px;
  height: 16px;
}

.clear {
  margin-left: 9px;
}

.clear svg {
  stroke-width: 2px;
}

.field {
  width: 133px;
  height: 27px;
  display: flex;
  align-items: center;
  padding: 0 4px 0 2px;
  border: 1px solid #d0d0d0;
  background-color: #fff;
  font: inherit;
  color: inherit;
}

.field select {
  flex: 1;
  height: 25px;
  padding: 0 0 0 4px;
  appearance: none;
  border: none;
  background: none;
  font: inherit;
  color: inherit;
}

.dialog hr {
  margin: 5px 13px 4px 2px;
  border: none;
  border-top: 1px solid #c8c8c8;
}

.dialog-foot {
  height: 37px;
  padding: 0 11px 0 8px;
  display: flex;
  align-items: center;
  gap: 10px;
  border-top: 1px solid #d0d0d0;
}

.info {
  width: 12px;
  height: 12px;
  margin-right: auto;
  stroke: #fff;
}

.info circle {
  fill: #000;
  stroke: none;
}

.ok,
.cancel {
  width: 60px;
  height: 19px;
  font-size: 12px;
}

.ok {
  border: 1px solid #8fa6bf;
  background-image: linear-gradient(#5a93c9, #3a6798);
  color: #fff;
}

.cancel {
  border: 1px solid #b3b3b3;
  background-color: #e8e8e8;
  color: #666;
}

.hint {
  margin: auto 15px 5px 0;
  font-family: Roboto, sans-serif;
  font-size: 12px;
  font-weight: 500;
  color: #eee;
}

/* follows the manipulator in the middle of the canvas */
.value-box {
  position: absolute;
  left: calc(50% + 119px);
  top: calc(50% - 7px);
  width: 107px;
  height: 22px;
  padding: 0 9px 0 5px;
  display: flex;
  align-items: center;
  gap: 6px;
  background-color: #f1f1f1;
}

.grip {
  width: 3px;
  height: 20px;
  border: 1px dotted #bbb;
}

.value-box input {
  width: 70px;
  height: 20px;
  padding: 0;
  border: 1px solid #c8c8c8;
  font: inherit;
  color: inherit;
  text-align: center;
}

.value-box button {
  margin-left: auto;
}

.value-box svg {
  width: 4px;
  height: 14px;
  fill: #888;
}

.timeline {
  height: 51px;
  padding: 0 14px 0 9px;
  display: flex;
  align-items: center;
  gap: 9px;
  background-color: #f1f1f1;
  border-top: 1px solid #ddd;
  border-bottom: 2px solid #444;
}

.feature {
  width: 32px;
  height: 34px;
  margin-left: 8px;
}

.settings {
  margin-left: auto;
}
</style>
